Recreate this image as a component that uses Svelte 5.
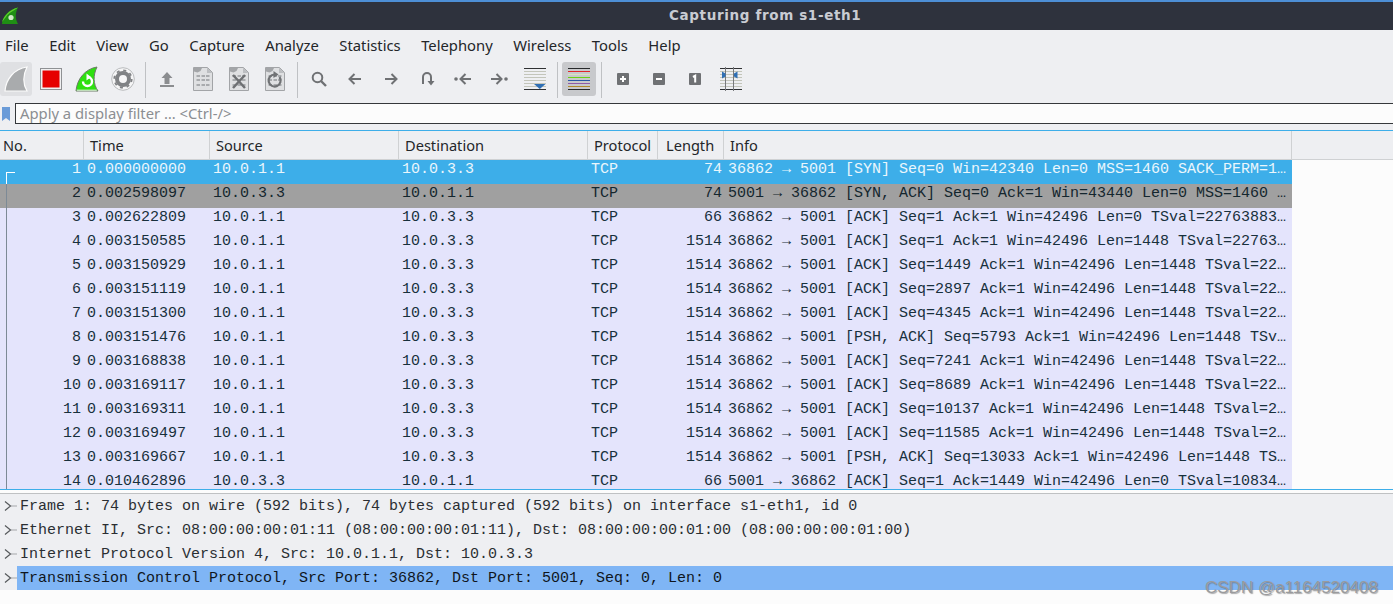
<script>
  const cols = ['No.', 'Time', 'Source', 'Destination', 'Protocol', 'Length', 'Info'];
  const A = '10.0.1.1', B = '10.0.3.3';
  const rows = [
    [1, '0.000000000', A, B, 74, '36862 → 5001 [SYN] Seq=0 Win=42340 Len=0 MSS=1460 SACK_PERM=1…', 'sel'],
    [2, '0.002598097', B, A, 74, '5001 → 36862 [SYN, ACK] Seq=0 Ack=1 Win=43440 Len=0 MSS=1460 …', 'rel'],
    [3, '0.002622809', A, B, 66, '36862 → 5001 [ACK] Seq=1 Ack=1 Win=42496 Len=0 TSval=22763883…', ''],
    [4, '0.003150585', A, B, 1514, '36862 → 5001 [ACK] Seq=1 Ack=1 Win=42496 Len=1448 TSval=22763…', ''],
    [5, '0.003150929', A, B, 1514, '36862 → 5001 [ACK] Seq=1449 Ack=1 Win=42496 Len=1448 TSval=22…', ''],
    [6, '0.003151119', A, B, 1514, '36862 → 5001 [ACK] Seq=2897 Ack=1 Win=42496 Len=1448 TSval=22…', ''],
    [7, '0.003151300', A, B, 1514, '36862 → 5001 [ACK] Seq=4345 Ack=1 Win=42496 Len=1448 TSval=22…', ''],
    [8, '0.003151476', A, B, 1514, '36862 → 5001 [PSH, ACK] Seq=5793 Ack=1 Win=42496 Len=1448 TSv…', ''],
    [9, '0.003168838', A, B, 1514, '36862 → 5001 [ACK] Seq=7241 Ack=1 Win=42496 Len=1448 TSval=22…', ''],
    [10, '0.003169117', A, B, 1514, '36862 → 5001 [ACK] Seq=8689 Ack=1 Win=42496 Len=1448 TSval=22…', ''],
    [11, '0.003169311', A, B, 1514, '36862 → 5001 [ACK] Seq=10137 Ack=1 Win=42496 Len=1448 TSval=2…', ''],
    [12, '0.003169497', A, B, 1514, '36862 → 5001 [ACK] Seq=11585 Ack=1 Win=42496 Len=1448 TSval=2…', ''],
    [13, '0.003169667', A, B, 1514, '36862 → 5001 [PSH, ACK] Seq=13033 Ack=1 Win=42496 Len=1448 TS…', ''],
    [14, '0.010462896', B, A, 66, '5001 → 36862 [ACK] Seq=1 Ack=1449 Win=42496 Len=0 TSval=10834…', '']
  ];
  const details = [
    'Frame 1: 74 bytes on wire (592 bits), 74 bytes captured (592 bits) on interface s1-eth1, id 0',
    'Ethernet II, Src: 08:00:00:00:01:11 (08:00:00:00:01:11), Dst: 08:00:00:00:01:00 (08:00:00:00:01:00)',
    'Internet Protocol Version 4, Src: 10.0.1.1, Dst: 10.0.3.3',
    'Transmission Control Protocol, Src Port: 36862, Dst Port: 5001, Seq: 0, Len: 0'
  ];
  const menus = ['File', 'Edit', 'View', 'Go', 'Capture', 'Analyze', 'Statistics', 'Telephony', 'Wireless', 'Tools', 'Help'];
</script>

{#snippet doc()}
  <path d="M2.500 .5h14l5 5v18h-19z" fill="#dfe0e2" stroke="#a2a4a7" stroke-width="1"/>
  <path d="M16 .5v5.500h5.500z" fill="#bcbec1"/>
  <path d="M3 1h8l-1.500 3 -3 1.500 -3.500-1z" fill="#a3a5a8"/>
  <g fill="#a9abae">
    <rect x="5.500" y="8" width="3.500" height="2"/><rect x="10.500" y="8" width="3.500" height="2"/><rect x="15" y="8" width="3.500" height="2"/>
    <rect x="5.500" y="12" width="3.500" height="2"/><rect x="10.500" y="12" width="3.500" height="2"/><rect x="15" y="12" width="3.500" height="2"/>
    <rect x="5.500" y="17" width="3.500" height="2"/><rect x="10.500" y="17" width="3.500" height="2"/><rect x="15" y="17" width="3.500" height="2"/>
  </g>
{/snippet}

<div class="app">
  <div class="accent"></div>
  <header class="title">
    <svg class="logo" viewBox="0 0 18 18" width="18" height="18">
      <path d="M1 17C1.500 10 7 2.500 17 .5C14 6 14 12 17 17Z" fill="#1f8f14"/>
      <path d="M1 15C3 9 8 3 17 .5C13 4 8 5 5 10Z" fill="#5ed02a"/>
      <circle cx="10" cy="10.500" r="2.600" fill="#cfe8c6"/>
    </svg>
    <h1>Capturing from s1-eth1</h1>
  </header>

  <nav class="menu">
    {#each menus as m}<span>{m}</span>{/each}
  </nav>

  <div class="toolbar">
    <div class="tool first active">
      <svg viewBox="0 0 24 26" width="24" height="26"><path d="M1 25C2 13 10 3 23 1C19 9 19 18 23 25Z" fill="#a9abad" stroke="#fcfcfc" stroke-width="1.200"/></svg>
    </div>
    <div class="tool">
      <svg viewBox="0 0 24 24" width="24" height="24"><rect x="1.500" y="1.500" width="21" height="21" fill="#f0f0f1" stroke="#8f9194" stroke-width="1"/><rect x="3.500" y="3.500" width="17" height="17" fill="#e60000"/></svg>
    </div>
    <div class="tool">
      <svg viewBox="0 0 24 26" width="24" height="26"><path d="M1 25C2 13 10 3 22 1C18 9 18 18 23 25Z" fill="#2ee010" stroke="#6d7a68" stroke-width="1"/><path d="M1.800 24.200h20" stroke="#f4f4f4" stroke-width="1"/><path d="M8 15.500a4.500 4.500 0 1 0 4.500-4.500" fill="none" stroke="#fff" stroke-width="2.400"/><path d="M11.500 7.500l4.500 3.500 -4.500 3.500z" fill="#fff"/></svg>
    </div>
    <div class="tool">
      <svg viewBox="0 0 24 24" width="24" height="24"><circle cx="12" cy="12" r="11.300" fill="#f6f6f7" stroke="#b9bbbd" stroke-width="1"/><circle cx="12" cy="12" r="6" fill="none" stroke="#808285" stroke-width="4"/><circle cx="12" cy="12" r="8.700" fill="none" stroke="#808285" stroke-width="1.800" stroke-dasharray="3 3.830"/></svg>
    </div>
    <i class="sep"></i>
    <div class="tool">
      <svg viewBox="0 0 24 24" width="24" height="24"><path d="M12 5l5.500 6h-3v6h-5v-6h-3z" fill="#8b8d90"/><rect x="5" y="18" width="14" height="2" fill="#8b8d90"/></svg>
    </div>
    <div class="tool"><svg viewBox="0 0 24 24" width="24" height="24">{@render doc()}</svg></div>
    <div class="tool">
      <svg viewBox="0 0 24 24" width="24" height="24">{@render doc()}<path d="M6 8l12 13M18 8L6 21" stroke="#6e7073" stroke-width="2.500"/></svg>
    </div>
    <div class="tool">
      <svg viewBox="0 0 24 24" width="24" height="24">{@render doc()}<path d="M16.500 10a6 6 0 1 1-5-2.500" fill="none" stroke="#707275" stroke-width="2.200"/><path d="M10.500 4l5 3.500 -5 3.500z" fill="#707275"/></svg>
    </div>
    <i class="sep"></i>
    <div class="tool">
      <svg viewBox="0 0 24 24" width="24" height="24"><circle cx="10.500" cy="10.500" r="4.800" fill="none" stroke="#6f7174" stroke-width="2"/><path d="M14 14l5 5" stroke="#6f7174" stroke-width="2.400"/></svg>
    </div>
    <div class="tool">
      <svg viewBox="0 0 24 24" width="24" height="24"><path d="M18 12H7M11.500 7L6.500 12l5 5" fill="none" stroke="#6f7174" stroke-width="2"/></svg>
    </div>
    <div class="tool">
      <svg viewBox="0 0 24 24" width="24" height="24"><path d="M6 12h11M12.500 7l5 5 -5 5" fill="none" stroke="#6f7174" stroke-width="2"/></svg>
    </div>
    <div class="tool">
      <svg viewBox="0 0 24 24" width="24" height="24"><path d="M8 17V10a4 4 0 0 1 8 0v5" fill="none" stroke="#6f7174" stroke-width="2"/><path d="M12.500 14h7L16 18.500z" fill="#6f7174"/></svg>
    </div>
    <div class="tool">
      <svg viewBox="0 0 24 24" width="24" height="24"><circle cx="5" cy="12" r="1.800" fill="#6f7174"/><path d="M20 12H10M14.500 7l-5 5 5 5" fill="none" stroke="#6f7174" stroke-width="2"/></svg>
    </div>
    <div class="tool">
      <svg viewBox="0 0 24 24" width="24" height="24"><circle cx="19" cy="12" r="1.800" fill="#6f7174"/><path d="M4 12h10M9.500 7l5 5 -5 5" fill="none" stroke="#6f7174" stroke-width="2"/></svg>
    </div>
    <div class="tool">
      <svg viewBox="0 0 24 24" width="24" height="24">
        <path d="M1 1.500h22M1 22.500h22" stroke="#2f3133" stroke-width="1"/>
        <path d="M1 4.500h22M1 7.500h22M1 10.500h22M1 13.500h22M1 16.500h22M1 19.500h22" stroke="#c3c5ba" stroke-width="1"/>
        <path d="M11 17h11.500l-5.700 5z" fill="#2f6fb4"/>
      </svg>
    </div>
    <i class="sep"></i>
    <div class="tool on">
      <svg viewBox="0 0 24 24" width="24" height="24">
        <path d="M1 1.500h22" stroke="#26282a"/><path d="M1 4.500h22" stroke="#e0262b"/><path d="M1 7.500h22" stroke="#d9e2c0"/><path d="M1 10.500h22" stroke="#6bd014"/><path d="M1 13.500h22" stroke="#2b58a5"/><path d="M1 16.500h22" stroke="#8d5aa6"/><path d="M1 19.500h22" stroke="#b0892c"/><path d="M1 22.500h22" stroke="#26282a"/>
      </svg>
    </div>
    <i class="sep"></i>
    <div class="tool">
      <svg viewBox="0 0 24 24" width="24" height="24"><rect x="6" y="6" width="12" height="12" rx="1" fill="#6f7174"/><path d="M9 12h6M12 9v6" stroke="#fff" stroke-width="2"/></svg>
    </div>
    <div class="tool">
      <svg viewBox="0 0 24 24" width="24" height="24"><rect x="6" y="6" width="12" height="12" rx="1" fill="#6f7174"/><path d="M9 12h6" stroke="#fff" stroke-width="2"/></svg>
    </div>
    <div class="tool">
      <svg viewBox="0 0 24 24" width="24" height="24"><rect x="6" y="6" width="12" height="12" rx="1" fill="#6f7174"/><path d="M10 10l2.200-1.200V15.500" fill="none" stroke="#fff" stroke-width="2"/></svg>
    </div>
    <div class="tool">
      <svg viewBox="0 0 24 24" width="24" height="24">
        <path d="M1 1.500h22M1 22.500h22" stroke="#2f3133"/>
        <path d="M1 4.500h22M1 7.500h22M1 10.500h22M1 13.500h22M1 16.500h22M1 19.500h22" stroke="#c3c5ba"/>
        <path d="M6.500 0v24M14.500 0v24" stroke="#77797c" stroke-width="1"/>
        <path d="M3 4.500l3.500 2v3l-3.500 2zM18.500 4.500l-3.500 2v3l3.500 2z" fill="#2f6fb4"/>
      </svg>
    </div>
  </div>

  <div class="filter">
    <svg class="mark" viewBox="0 0 8 14" width="8" height="14"><path d="M0 0h8v14L4 11 0 14z" fill="#6a9bd8"/></svg>
    <div class="input">Apply a display filter … &lt;Ctrl-/&gt;</div>
  </div>

  <div class="list">
    <div class="head">
      {#each cols as c}<div class="hc">{c}</div>{/each}
      <div class="hc rest"></div>
    </div>
    <div class="body">
      {#each rows as r}
        <div class="row {r[6]}">
          <div class="num">{r[0]}</div>
          <div class="c">{r[1]}</div>
          <div class="c">{r[2]}</div>
          <div class="c">{r[3]}</div>
          <div class="c">TCP</div>
          <div class="len">{r[4]}</div>
          <div class="info">{r[5]}</div>
        </div>
      {/each}
      <div class="bracket"></div>
      <div class="tick"></div>
    </div>
  </div>

  <div class="details">
    {#each details as d, i}
      <div class="drow">
        <svg class="chev" viewBox="0 0 17 24" width="17" height="24"><path d="M11 12h6" stroke="#a5a7aa" stroke-width="1"/><path d="M5 7.500l5.500 4.500 -5.500 4.500" fill="none" stroke="#55585b" stroke-width="1.200"/></svg>
        <div class="dtext" class:hl={i === 3}>{d}</div>
      </div>
    {/each}
  </div>
  <div class="mark-text">CSDN @a1164520408</div>
</div>

<style>
  :global(body) { margin: 0; background: #fcfcfc; }
  .app { position: relative; width: 1393px; height: 604px; overflow: hidden; background: #fcfcfc; font-family: "Noto Sans", "Open Sans", sans-serif; color: #232629; }
  .accent { height: 2px; background: #4d8fd6; }
  .title { height: 28px; background: #2e323d; display: flex; align-items: center; padding-left: 1px; }
  .logo { margin-top: -1px; }
  h1 { margin: -2px 0 0 650px; font: bold 13.500px "DejaVu Sans", sans-serif; letter-spacing: .64px; color: #c9ccd3; white-space: nowrap; }
  .menu { height: 30px; background: #eeeff2; display: flex; align-items: center; gap: 20.500px; padding-left: 5px; font-size: 14.800px; }
  .toolbar { height: 43px; background: #eeeff2; display: flex; align-items: flex-start; padding-top: 2px; box-sizing: border-box; }
  .tool { width: 36px; height: 34px; flex: none; display: flex; align-items: center; justify-content: center; border-radius: 3px; box-sizing: border-box; }
  .first { width: 32px; margin-right: 1px; }
  .active { background: #dfe0e3; }
  .on { background: #c8c9cc; width: 34px; margin: 0 1px; }
  .sep { width: 1px; height: 36px; margin: 0 3px 0 4px; background: #bfc1c4; flex: none; }
  .filter { height: 27px; background: #eeeff2; display: flex; align-items: flex-start; border-bottom: 1px solid #3daee9; }
  .mark { margin: 4px 5px 0 2px; flex: none; }
  .input { flex: 1; height: 19px; background: #fcfcfc; border-top: 1px solid #35383b; border-bottom: 1px solid #35383b; border-left: 1px solid #35383b; padding-left: 4px; font-size: 14.800px; line-height: 19px; color: #8b8e92; }
  .list { height: 358px; display: flex; flex-direction: column; border-bottom: 1px solid #3daee9; overflow: hidden; }
  .head { height: 28px; flex: none; background: #eeeff2; border-bottom: 1px solid #cfd1d3; display: grid; grid-template-columns: 84px 126px 189px 189px 70px 66px 568px 1fr; font-size: 14.600px; }
  .hc { border-right: 1px solid #cfd1d3; padding-left: 3px; line-height: 28px; white-space: nowrap; }
  .hc:nth-child(n+2) { padding-left: 6px; }
  .hc:nth-child(6) { padding-left: 8px; }
  .rest { border-right: 0; }
  .body { position: relative; flex: 1; overflow: hidden; font: 15px/16px "Liberation Mono", monospace; color: #18303c; }
  .row { display: grid; grid-template-columns: 84px 126px 189px 189px 70px 66px 568px; width: 1292px; height: 24px; padding-top: 2px; background: #e4e4fc; white-space: pre; box-sizing: border-box; }
  .row > div { overflow: hidden; }
  .sel { background: #3daee9; color: #eaf6fc; }
  .rel { background: #a0a0a0; color: #14262e; }
  .num { text-align: right; padding-right: 3px; }
  .c { padding-left: 3px; }
  .len { text-align: right; padding-right: 2px; }
  .info { padding-left: 4px; }
  .bracket { position: absolute; left: 6px; top: 12px; bottom: 0; width: 1px; background: #7d8a96; }
  .tick { position: absolute; left: 6px; top: 12px; width: 9px; height: 12px; box-sizing: border-box; border-top: 1px solid #fff; border-left: 1px solid #fff; }
  .details { margin-top: 3px; border-top: 1px solid #bfc1c3; background: #eeeff2; font: 15px/26px "Liberation Mono", monospace; color: #2a2e32; }
  .drow { display: flex; height: 24px; white-space: pre; }
  .chev { flex: none; }
  .dtext { flex: 1; padding-left: 3px; height: 24px; }
  .hl { background: #7fb5f5; color: #10151c; }
  .mark-text { position: absolute; left: 1205px; top: 578px; font: 17px/20px "Liberation Sans", sans-serif; color: #9a9b9d; text-shadow: 1px 1px 1px #55565880; white-space: nowrap; }
</style>
